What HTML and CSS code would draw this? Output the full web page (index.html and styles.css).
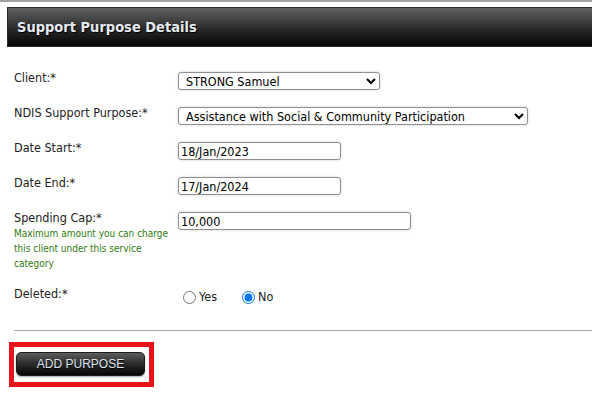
FILE: index.html
```html
<!DOCTYPE html>
<html lang="en">
<head>
    <meta charset="UTF-8">
    <meta name="viewport" content="width=device-width, initial-scale=1.0">
    <title>Support Purpose Details</title>
    <link rel="stylesheet" href="styles.css">
</head>
<body>
    <div class="top-bar"></div>

    <div class="page">
        <div class="panel-head">
            <h2>Support Purpose Details</h2>
        </div>

        <form class="purpose-form" onsubmit="return false;">
            <div class="form-row">
                <label class="form-label" for="client">Client:*</label>
                <div class="form-field">
                    <select id="client" class="field-client">
                        <option>STRONG Samuel</option>
                    </select>
                </div>
            </div>

            <div class="form-row">
                <label class="form-label" for="purpose">NDIS Support Purpose:*</label>
                <div class="form-field">
                    <select id="purpose" class="field-purpose">
                        <option>Assistance with Social &amp; Community Participation</option>
                    </select>
                </div>
            </div>

            <div class="form-row">
                <label class="form-label" for="dateStart">Date Start:*</label>
                <div class="form-field">
                    <input type="text" id="dateStart" class="field-date" value="18/Jan/2023">
                </div>
            </div>

            <div class="form-row">
                <label class="form-label" for="dateEnd">Date End:*</label>
                <div class="form-field">
                    <input type="text" id="dateEnd" class="field-date" value="17/Jan/2024">
                </div>
            </div>

            <div class="form-row">
                <div class="form-label">
                    <label for="cap">Spending Cap:*</label>
                    <div class="help-text">Maximum amount you can charge this client under this service category</div>
                </div>
                <div class="form-field">
                    <input type="text" id="cap" class="field-cap" value="10,000">
                </div>
            </div>

            <div class="form-row">
                <div class="form-label">Deleted:*</div>
                <div class="form-field radio-group">
                    <label class="radio-option"><input type="radio" name="deleted" value="yes">Yes</label>
                    <label class="radio-option"><input type="radio" name="deleted" value="no" checked>No</label>
                </div>
            </div>

            <hr class="divider">

            <div class="highlight">
                <button type="submit" class="btn-dark">ADD PURPOSE</button>
            </div>
        </form>
    </div>
</body>
</html>
```

FILE: styles.css
```css
:root {
    --text-color: #222222;
    --help-color: #2f7a12;
    --field-border: #8e8e8e;
    --divider: #a6a6a6;
    --mark-red: #e8141c;
}

* {
    margin: 0;
    padding: 0;
    box-sizing: border-box;
}

body {
    font-family: "DejaVu Sans Condensed", "DejaVu Sans", sans-serif;
    font-stretch: semi-condensed;
    font-size: 12.5px;
    color: var(--text-color);
    background-color: #fff;
    overflow: hidden;
}

.top-bar {
    height: 2px;
    background-color: #a3a3a3;
}

.page {
    padding: 5px 0 0 7px;
}

/* dark gradient title bar */
.panel-head {
    margin-right: -10px;
    height: 40px;
    border: 1px solid #2b2b2b;
    background: linear-gradient(to bottom, #616161 0%, #2a2a2a 55%, #040404 100%);
}

.panel-head h2 {
    font-size: 14.5px;
    font-weight: bold;
    line-height: 37px;
    padding: 1px 0 0 9px;
    color: #e4eaf2;
    text-shadow: 1px 1px 1px #000;
}

.purpose-form {
    padding: 23px 0 0 7px;
}

.form-row {
    display: flex;
    align-items: flex-start;
    margin-bottom: 15px;
}

.form-label {
    width: 164px;
    flex-shrink: 0;
    line-height: 16px;
}

.help-text {
    width: 158px;
    font-size: 10px;
    line-height: 15px;
    color: var(--help-color);
}

.form-field {
    padding-top: 2px;
}

select,
input[type="text"] {
    font-family: inherit;
    font-stretch: inherit;
    font-size: 12.5px;
    color: #000;
    height: 18px;
    border: 1px solid var(--field-border);
    border-radius: 3px;
    background-color: #fff;
    box-shadow: 0 0 3px rgba(0, 0, 0, 0.18);
}

select {
    padding: 0 0 0 3px;
}

input[type="text"] {
    padding: 0 2px;
}

.field-client {
    width: 202px;
}

.field-purpose {
    width: 350px;
}

.field-date {
    width: 163px;
}

.field-cap {
    width: 233px;
}

.radio-group {
    display: flex;
    gap: 20px;
    padding-top: 3px;
}

.radio-option {
    display: flex;
    align-items: center;
    line-height: 16px;
}

.radio-option input {
    width: 13px;
    height: 13px;
    margin: 0 3px 0 5px;
}

.divider {
    border: none;
    border-top: 1px solid var(--divider);
    margin: 25px -10px 11px 0;
}

/* red mark round the button */
.highlight {
    display: inline-block;
    margin-left: -5px;
    border: 5px solid var(--mark-red);
    padding: 5px 4px 6px 2px;
}

.btn-dark {
    display: block;
    width: 129px;
    height: 24px;
    font-family: "Liberation Sans", Arial, sans-serif;
    font-size: 12px;
    color: #dfe6f0;
    text-shadow: 0 1px 1px #000;
    border: 1px solid #1c1c1c;
    border-radius: 5px;
    background: linear-gradient(to bottom, #5c5c5c 0%, #2b2b2b 50%, #050505 100%);
    box-shadow: 0 1px 2px rgba(0, 0, 0, 0.35);
    cursor: pointer;
}
```
